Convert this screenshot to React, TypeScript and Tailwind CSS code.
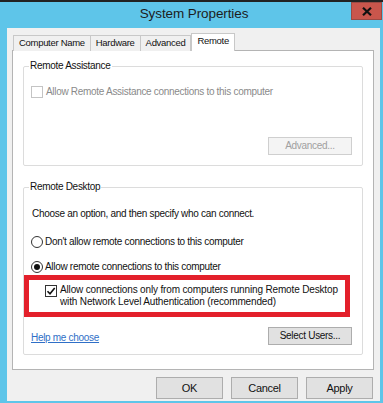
import React from 'react';

const font = { fontFamily: '"Liberation Sans", Arial, sans-serif' };

function CheckBox({ checked, disabled }: { checked?: boolean; disabled?: boolean }) {
  return (
    <span
      className={`flex h-[12px] w-[12px] shrink-0 items-center justify-center border bg-white ${
        disabled ? 'border-[#c4c4c4]' : 'border-[#333]'
      }`}
    >
      {checked && (
        <svg width="10" height="10" viewBox="0 0 10 10">
          <path d="M1.5 5.2 L4 7.8 L8.7 2" fill="none" stroke="#111" strokeWidth="1.6" />
        </svg>
      )}
    </span>
  );
}

function Radio({ checked }: { checked?: boolean }) {
  return (
    <span className="flex h-[12px] w-[12px] shrink-0 items-center justify-center rounded-full border border-[#333] bg-white">
      {checked && <span className="h-[6px] w-[6px] rounded-full bg-[#111]" />}
    </span>
  );
}

function Btn({ children, disabled, className = '' }: { children: React.ReactNode; disabled?: boolean; className?: string }) {
  return (
    <div
      className={`flex h-[18px] items-center justify-center border ${
        disabled ? 'border-[#cfcfcf] bg-[#f4f4f4] text-[#a0a0a0]' : 'border-[#adadad] bg-[#e1e1e1] text-[#111]'
      } ${className}`}
    >
      {children}
    </div>
  );
}

export default function App() {
  const tabs = ['Computer Name', 'Hardware', 'Advanced'];
  return (
    <div className="flex h-[403px] w-[383px] flex-col overflow-hidden border-t-2 border-[#222] bg-[#5ec5e9]" style={font}>
      {/* title bar */}
      <div className="flex h-[26px] shrink-0">
        <div className="w-[31px]" />
        <div className="flex flex-1 items-center justify-center pl-[6px] pb-[2px] text-[13.5px] tracking-[-0.1px] text-[#1d1d1d]">
          System Properties
        </div>
        <div className="mr-[1px] flex h-[18px] w-[31px] items-center justify-center border border-[#9a4a44] bg-[#c9564c]">
          <svg width="10" height="9" viewBox="0 0 10 9">
            <path d="M1 0.8 L9 8.2 M9 0.8 L1 8.2" stroke="#111" strokeWidth="2.2" />
          </svg>
        </div>
      </div>

      {/* window body */}
      <div className="ml-[7px] mr-[3px] flex h-[373px] flex-col bg-[#f0f0f0] px-[5px] pt-[5px] pr-[6px] text-[10px] leading-[14px] tracking-[-0.3px] text-[#111]">
        {/* tabs */}
        <div className="relative z-10 -mb-px flex h-[18px] items-end pl-[1px] text-[9.5px]">
          {tabs.map((t, i) => (
            <div
              key={t}
              className={`flex h-[16px] items-center border-t border-r border-[#c8c8c8] bg-[#f0f0f0] px-[5px] pb-px ${
                i === 0 ? 'border-l' : ''
              }`}
            >
              {t}
            </div>
          ))}
          <div className="flex h-[18px] items-center border-x border-t border-[#c8c8c8] bg-white px-[5px] pb-[3px]">Remote</div>
        </div>

        {/* tab panel */}
        <div className="flex h-[320px] flex-col border border-[#b4b4b4] bg-white px-[10px]">
          <fieldset className="mt-[8px] h-[107px] shrink-0 rounded-[2px] border border-[#dcdcdc] px-[7px]">
            <legend className="-ml-[2px] px-[1px]">Remote Assistance</legend>
            <div className="mt-[12px] flex h-[14px] items-center gap-[3px] text-[#8a8a8a]">
              <CheckBox disabled />
              <span>Allow Remote Assistance connections to this computer</span>
            </div>
            <div className="mt-[38px] flex justify-end pr-[3px]">
              <Btn disabled className="w-[84px]">Advanced...</Btn>
            </div>
          </fieldset>

          <fieldset className="mt-[14px] h-[175px] shrink-0 rounded-[2px] border border-[#dcdcdc] px-[7px]">
            <legend className="-ml-[2px] px-[1px]">Remote Desktop</legend>
            <div className="mt-[13px] flex h-[14px] items-center pl-[1px]">Choose an option, and then specify who can connect.</div>
            <div className="mt-[14px] flex h-[14px] items-center gap-[2px]">
              <Radio />
              <span>Don't allow remote connections to this computer</span>
            </div>
            <div className="mt-[11px] flex h-[14px] items-center gap-[2px]">
              <Radio checked />
              <span>Allow remote connections to this computer</span>
            </div>
            <div className="mt-[1px] -ml-[7px] flex h-[42px] w-[326px] items-start gap-[3px] border-[5px] border-[#e3202b] pl-[16px] pt-[5px] tracking-[-0.15px]">
              <CheckBox checked />
              <span className="-mt-[1px] leading-[12px]">
                Allow connections only from computers running Remote Desktop
                <br />
                with Network Level Authentication (recommended)
              </span>
            </div>
            <div className="mt-[10px] flex items-center justify-between pr-[3px]">
              <span className="mt-[3px] text-[#2f6fc7] underline">Help me choose</span>
              <Btn className="w-[84px]">Select Users...</Btn>
            </div>
          </fieldset>
        </div>

        {/* dialog buttons */}
        <div className="mt-[7px] flex justify-end gap-[8px] pr-[1px]">
          <Btn className="h-[22px] w-[67px] text-[11px]">OK</Btn>
          <Btn className="h-[22px] w-[67px] text-[11px]">Cancel</Btn>
          <Btn className="h-[22px] w-[67px] text-[11px]">Apply</Btn>
        </div>
      </div>
    </div>
  );
}
